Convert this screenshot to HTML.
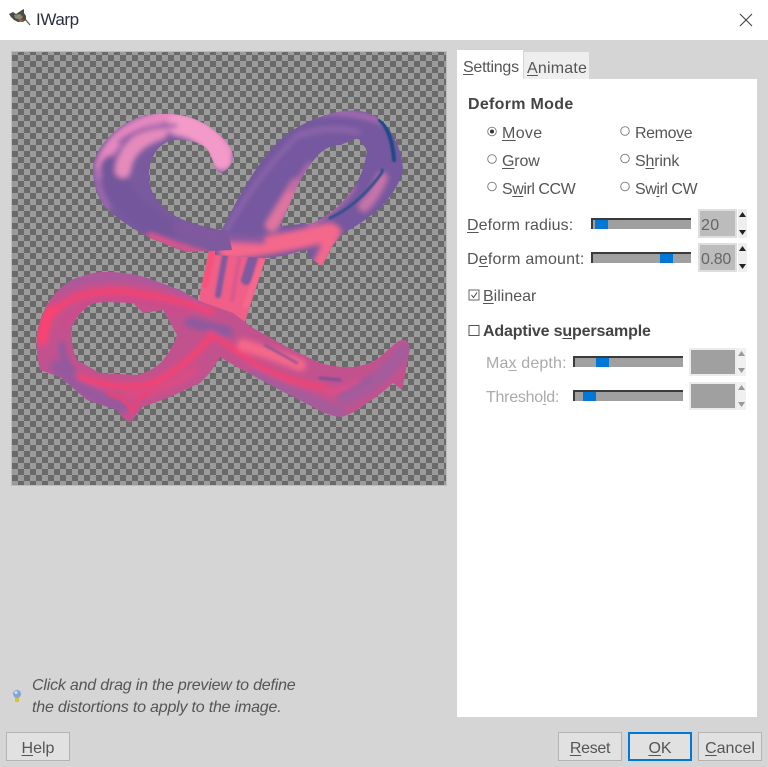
<!DOCTYPE html>
<html><head><meta charset="utf-8"><style>
html,body{margin:0;padding:0}
body{width:768px;height:767px;overflow:hidden;position:relative;background:#d5d5d5;font-family:"Liberation Sans",sans-serif;font-size:16px;color:#555}
.a{position:absolute}
.t{position:absolute;white-space:nowrap;line-height:20px;filter:blur(.25px)}
u{text-underline-offset:2px}
.b{font-weight:bold;color:#444}
.g{color:#aaa}
.btn{position:absolute;top:732px;height:27px;width:62px;background:#e1e1e1;border:1px solid #b4b4b4;text-align:center;line-height:31px;box-sizing:content-box}
.track{position:absolute;height:9px;background:#a0a0a0;border-top:2px solid #3a3a3a;border-left:2px solid #3a3a3a;box-sizing:content-box}
.thumb{position:absolute;top:0;height:9px;background:#0078d7}
.box{position:absolute;border:2px solid #dedede;background:#bcbcbc;box-sizing:border-box}
.box.dis{background:#a0a0a0;border-color:#ececec}
svg g{stroke-linecap:round;stroke-linejoin:round}
</style></head><body>
<div class="a" style="left:0;top:0;width:768px;height:40px;background:#fff"></div>
<svg class="a" style="left:8px;top:8px" width="24" height="20" viewBox="0 0 24 20">
<path d="M1 6 L5 4 L8 6 L11 4 L14 2 L16 1 L16 5 L18 8 L18 12 L15 14 L10 14 L6 12 L3 9Z" fill="#4d4a42"/>
<path d="M6 7 L12 6 L15 9 L12 12 L7 10Z" fill="#8b8777"/>
<path d="M11 11 L16 12 L14 14 L11 14Z" fill="#a0603a"/>
<path d="M17 11 L22 17" stroke="#555" stroke-width="1.2"/>
</svg>
<div class="t" style="left:36px;top:10px;font-size:17px;color:#2a3040;letter-spacing:-.4px">IWarp</div>
<svg class="a" style="left:738px;top:12px" width="16" height="16"><path d="M2 2L14 14M14 2L2 14" stroke="#444" stroke-width="1.1"/></svg>

<svg class="a" style="left:0;top:0" width="460" height="490" viewBox="0 0 460 490">
<defs>
<pattern id="ck" x="12" y="43" width="12" height="12" patternUnits="userSpaceOnUse">
<rect width="12" height="12" fill="#9b9b9b"/><rect width="6" height="6" fill="#6a6a6a"/><rect x="6" y="6" width="6" height="6" fill="#6a6a6a"/>
</pattern>
<filter id="b1" filterUnits="userSpaceOnUse" x="0" y="0" width="460" height="490"><feGaussianBlur stdDeviation="1"/></filter>
<filter id="b2" filterUnits="userSpaceOnUse" x="0" y="0" width="460" height="490"><feGaussianBlur stdDeviation="2.600"/></filter>
<filter id="b3" filterUnits="userSpaceOnUse" x="0" y="0" width="460" height="490"><feGaussianBlur stdDeviation=".7"/></filter>
<clipPath id="curl"><path d="M221 173Q233 168 233 155Q230 140 205 124Q185 113 163 114Q140 113 120 127Q97 145 93 165Q92 190 105 207Q120 222 150 238L185 252L232 250L228 231Q195 226 177 217Q155 205 150 185Q146 165 157 150Q165 140 177 140Q200 140 208 150Q213 160 214 165Q216 172 221 173Z"/></clipPath>
<clipPath id="loop"><path clip-rule="evenodd" d="M215 240Q225 225 232 210C245 185 260 160 280 140Q305 118 343 111Q370 108 385 124Q402 145 403 170Q398 190 380 208Q360 225 343 233L333 245L322 266L310 258L306 249Q285 257 265 258L215 255ZM358 138L340 145Q328 145 318 155Q305 170 297 187Q288 208 280 226L313 223Q335 213 350 193Q364 175 367 150Z"/></clipPath>
<clipPath id="stem"><path d="M210 245L200 293L200 310L245 322L270 245Z"/></clipPath>
<clipPath id="bot"><path clip-rule="evenodd" d="M40 370Q35 350 37 333Q40 315 50 300Q65 280 80 277Q95 271 110 272Q135 273 153 280L180 290L202 302L233 313L253 328L287 347L320 363Q338 368 353 367Q370 365 380 357L397 342Q404 338 408 342Q411 348 409 353Q405 375 402 390L393 383Q380 395 367 403Q352 415 340 417Q325 415 313 407L280 390L237 367L220 357Q212 372 200 383L170 397L143 407Q136 415 130 423Q122 418 117 410L87 400L60 377Q48 373 40 370ZM72 327Q70 345 77 360L100 373L137 375Q155 370 163 360Q172 350 177 335L163 310L143 313L133 303L107 302Q92 302 87 307Q77 315 72 327Z"/></clipPath>
</defs>
<rect x="11" y="51" width="436" height="435" fill="#bdbdbd"/>
<rect x="12" y="52" width="434" height="433" fill="url(#ck)"/>

<g clip-path="url(#stem)">
<rect x="195" y="240" width="80" height="85" fill="#ef5f88"/>
<g filter="url(#b1)" fill="none">
<path d="M212 252L205 285" stroke="#f9507c" stroke-width="6"/>
<path d="M226 250L218 295" stroke="#7f5a9e" stroke-width="6"/>
<path d="M240 254L232 300" stroke="#d9588f" stroke-width="4"/>
<path d="M256 248L246 280" stroke="#7f5a9e" stroke-width="10"/>
<path d="M262 262L246 305" stroke="#f36a8e" stroke-width="6"/>
</g>
</g>

<g clip-path="url(#loop)">
<rect x="205" y="100" width="205" height="170" fill="#75589f"/>
<g filter="url(#b2)" fill="none">
<path d="M225 232Q255 178 300 133" stroke="#9a6cb0" stroke-width="3"/>
<path d="M300 116Q345 106 388 124" stroke="#a76cb0" stroke-width="6"/>
<path d="M300 135Q330 125 358 132" stroke="#9368ab" stroke-width="5"/>
<path d="M297 185L272 225" stroke="#df749f" stroke-width="14"/>
<path d="M310 165L292 190" stroke="#b56aa8" stroke-width="6"/>
<path d="M382 178Q375 195 364 206" stroke="#c773a8" stroke-width="12"/>
<path d="M310 223Q338 210 353 187" stroke="#b86aa8" stroke-width="6"/>
<path d="M228 250Q275 246 330 232" stroke="#f4688c" stroke-width="19"/>
<path d="M320 262L335 232" stroke="#f4688c" stroke-width="13"/>
<path d="M218 238L262 240" stroke="#8a5aa0" stroke-width="8"/>
</g>
<g filter="url(#b3)" fill="none">
<path d="M330 218Q355 207 378 178Q384 170 382 170" stroke="#34508c" stroke-width="3"/>
<path d="M380 120Q392 132 394 160" stroke="#1f4a85" stroke-width="4"/>
</g>
</g>

<g clip-path="url(#curl)">
<rect x="85" y="105" width="155" height="155" fill="#7a5a9e"/>
<g filter="url(#b2)" fill="none">
<path d="M100 172Q110 128 165 116Q205 118 228 150" stroke="#e588c0" stroke-width="13"/>
<path d="M178 125Q210 130 222 160" stroke="#f39ac8" stroke-width="22"/>
<path d="M113 168Q115 205 165 230" stroke="#73569b" stroke-width="26"/>
<path d="M123 170Q126 143 160 132" stroke="#e58bbc" stroke-width="16"/>
<path d="M120 142Q145 124 175 126" stroke="#8a5aa4" stroke-width="4"/>
<path d="M96 170Q97 190 108 208" stroke="#a76bb2" stroke-width="5"/>
<path d="M150 236Q175 246 205 254" stroke="#ee5584" stroke-width="6"/>
<path d="M180 228L232 240" stroke="#80599e" stroke-width="14"/>
</g>
</g>

<g clip-path="url(#bot)">
<rect x="30" y="265" width="385" height="165" fill="#c2528e"/>
<g filter="url(#b2)" fill="none">
<path d="M60 288Q100 268 160 282Q190 293 205 303" stroke="#a85a9e" stroke-width="8"/>
<path d="M42 335Q55 290 120 291Q180 298 212 312" stroke="#fb3f6e" stroke-width="6"/>
<path d="M42 340Q45 318 52 310" stroke="#fb4270" stroke-width="11"/>
<path d="M63 327Q72 305 107 298Q150 300 190 315" stroke="#cf4a8a" stroke-width="5"/>
<path d="M57 367Q85 395 120 407" stroke="#99599e" stroke-width="15"/>
<path d="M62 345Q62 360 72 370" stroke="#8f5a9f" stroke-width="7"/>
<path d="M80 377Q120 392 153 383Q185 368 210 338" stroke="#fb3f6e" stroke-width="6"/>
<path d="M125 396Q160 395 195 370" stroke="#e24a80" stroke-width="6"/>
<path d="M190 322L228 332" stroke="#8d5a9e" stroke-width="11"/>
<path d="M243 345Q275 355 300 365" stroke="#f5688a" stroke-width="12"/>
<path d="M210 333Q235 350 260 367Q290 382 325 388" stroke="#fb3f6e" stroke-width="5"/>
<path d="M253 375Q300 398 340 413" stroke="#a45b9b" stroke-width="13"/>
<path d="M345 398Q380 383 404 350" stroke="#a55c9b" stroke-width="15"/>
<path d="M327 393Q345 390 358 382" stroke="#ea4c84" stroke-width="4"/>
<path d="M340 395L370 378" stroke="#8d5a9e" stroke-width="3"/>
</g>
<g filter="url(#b1)" fill="none">
<path d="M108 394Q128 398 132 412Q136 398 148 394" stroke="#f03f70" stroke-width="3"/>
<path d="M265 345L297 363" stroke="#7b4f96" stroke-width="2"/>
<path d="M320 378L340 380" stroke="#7b4f96" stroke-width="3"/>
</g>
</g>
</svg>

<div class="a" style="left:457px;top:79px;width:300px;height:638px;background:#fff"></div>
<div class="a" style="left:457px;top:50px;width:66px;height:32px;background:#fff"></div>
<div class="a" style="left:524px;top:52px;width:65px;height:27px;background:#eee"></div>
<div class="t" style="left:463px;top:58px;letter-spacing:-.25px"><u>S</u>ettings</div>
<div class="t" style="left:527px;top:59px;letter-spacing:.2px"><u>A</u>nimate</div>
<div class="t b" style="left:468px;top:95px;letter-spacing:.3px">Deform Mode</div>

<svg class="a" style="left:460px;top:120px" width="200" height="80" fill="#fff" stroke="#777" stroke-width=".9">
<circle cx="32" cy="11.500" r="4.300"/><circle cx="165" cy="11" r="4.300"/>
<circle cx="32" cy="39" r="4.300"/><circle cx="165" cy="38.500" r="4.300"/>
<circle cx="32" cy="66.500" r="4.300"/><circle cx="165" cy="66.500" r="4.300"/>
<circle cx="32" cy="11.500" r="2" fill="#333" stroke="none"/>
</svg>
<div class="t" style="left:502px;top:124px;letter-spacing:.35px"><u>M</u>ove</div>
<div class="t" style="left:635px;top:124px;letter-spacing:-.4px">Remo<u>v</u>e</div>
<div class="t" style="left:502px;top:152px;letter-spacing:-.15px"><u>G</u>row</div>
<div class="t" style="left:635px;top:152px;letter-spacing:-.2px">S<u>h</u>rink</div>
<div class="t" style="left:502px;top:180px;letter-spacing:-.45px">S<u>w</u>irl CCW</div>
<div class="t" style="left:635px;top:180px;letter-spacing:-.45px">Sw<u>i</u>rl CW</div>

<div class="t" style="left:467px;top:216px;letter-spacing:.1px"><u>D</u>eform radius:</div>
<div class="track" style="left:591px;top:218px;width:98px"><div class="thumb" style="left:2px;width:13px"></div></div>
<div class="box" style="left:698px;top:209px;width:39px;height:29px"></div>
<div class="t" style="left:701px;top:216px;letter-spacing:.4px;color:#666">20</div>
<div class="t" style="left:467px;top:250px;letter-spacing:.2px">D<u>e</u>form amount:</div>
<div class="track" style="left:591px;top:252px;width:98px"><div class="thumb" style="left:67px;width:13px"></div></div>
<div class="box" style="left:698px;top:243px;width:39px;height:29px"></div>
<div class="t" style="left:701px;top:250px;letter-spacing:-.3px;color:#666">0.80</div>

<svg class="a" style="left:738px;top:209px" width="9" height="64">
<rect width="9" height="29" fill="#eee"/><rect y="34" width="9" height="29" fill="#eee"/>
<path d="M4.500 3L8 8H1ZM4.500 26L1 21H8Z" fill="#222"/>
<path d="M4.500 37L8 42H1ZM4.500 60L1 55H8Z" fill="#222"/>
</svg>

<svg class="a" style="left:468px;top:289px" width="13" height="50" fill="#fff" stroke="#666" stroke-width="1">
<rect x="1" y="1" width="10" height="10"/>
<path d="M3.500 6L5.500 8.500L9 3.500" fill="none" stroke="#444"/>
<rect x="1" y="36.500" width="10" height="10" stroke="#555"/>
</svg>
<div class="t" style="left:483px;top:287px"><u>B</u>ilinear</div>
<div class="t b" style="left:483px;top:322px;letter-spacing:-.15px">Adaptive s<u>u</u>persample</div>

<div class="t g" style="left:486px;top:354px;letter-spacing:.15px">Ma<u>x</u> depth:</div>
<div class="track" style="left:573px;top:356px;width:108px"><div class="thumb" style="left:21px;width:13px"></div></div>
<div class="box dis" style="left:689px;top:348px;width:48px;height:28px"></div>
<div class="t g" style="left:486px;top:388px;letter-spacing:-.25px">Thresho<u>l</u>d:</div>
<div class="track" style="left:573px;top:390px;width:108px"><div class="thumb" style="left:8px;width:13px"></div></div>
<div class="box dis" style="left:689px;top:382px;width:48px;height:28px"></div>
<svg class="a" style="left:737px;top:348px" width="9" height="63">
<rect width="9" height="28" fill="#f0f0f0"/><rect y="34" width="9" height="28" fill="#f0f0f0"/>
<path d="M4.500 3L8 8H1ZM4.500 25L1 20H8Z" fill="#999"/>
<path d="M4.500 37L8 42H1ZM4.500 59L1 54H8Z" fill="#999"/>
</svg>

<svg class="a" style="left:11px;top:688px" width="12" height="16">
<circle cx="6" cy="6" r="4" fill="#7ea6d8"/><circle cx="5" cy="4.500" r="1.500" fill="#cfe0f5"/>
<rect x="4" y="10" width="4" height="4" fill="#d9c22f"/>
</svg>
<div class="t" style="left:32px;top:676px;font-style:italic;letter-spacing:-.2px">Click and drag in the preview to define</div>
<div class="t" style="left:32px;top:698px;font-style:italic;letter-spacing:-.2px">the distortions to apply to the image.</div>

<div class="btn" style="left:6px"><u>H</u>elp</div>
<div class="btn" style="left:558px;letter-spacing:-.3px"><u>R</u>eset</div>
<div class="btn" style="left:628px;width:60px;height:25px;border:2px solid #0078d7;line-height:29px"><u>O</u>K</div>
<div class="btn" style="left:698px"><u>C</u>ancel</div>
</body></html>
